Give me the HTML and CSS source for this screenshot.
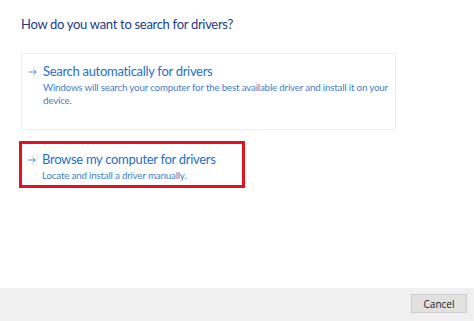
FILE: index.html
```html
<!DOCTYPE html>
<html lang="en">
<head>
    <meta charset="UTF-8">
    <title>Update Drivers</title>
    <link rel="stylesheet" href="styles.css">
</head>
<body>
    <div class="dialog">
        <div class="content">
            <h1 class="heading">How do you want to search for drivers?</h1>
            <div class="option option-auto">
                <div class="option-title">
                    <svg class="arrow" width="8" height="6" viewBox="0 0 8 6"><path d="M0 3H7.2M4.6 0.6L7.2 3L4.6 5.4" fill="none" stroke="#3f7fc9" stroke-width="0.9"/></svg>
                    <span>Search automatically for drivers</span>
                </div>
                <div class="option-desc">Windows will search your computer for the best available driver and install it on your device.</div>
            </div>
            <div class="option option-browse">
                <div class="option-title">
                    <svg class="arrow" width="8" height="6" viewBox="0 0 8 6"><path d="M0 3H7.2M4.6 0.6L7.2 3L4.6 5.4" fill="none" stroke="#3f7fc9" stroke-width="0.9"/></svg>
                    <span>Browse my computer for drivers</span>
                </div>
                <div class="option-desc">Locate and install a driver manually.</div>
            </div>
        </div>
        <div class="footer">
            <button class="btn">Cancel</button>
        </div>
    </div>
</body>
</html>
```

FILE: styles.css
```css
body {
    margin: 0;
    background: #fff;
    font-family: Lato, "Open Sans", sans-serif;
}
.dialog {
    width: 474px;
    height: 321px;
    display: flex;
    flex-direction: column;
}
.content {
    flex: 1;
    padding: 15px 0 0 21px;
}
.heading {
    margin: 0 0 20px;
    font-size: 13px;
    font-weight: normal;
    letter-spacing: -0.3px;
    color: #1c3b8f;
    line-height: 18px;
}
.option {
    display: flex;
    flex-direction: column;
    box-sizing: border-box;
}
.option-auto {
    width: 375px;
    height: 77px;
    border: 1px solid #e6eef6;
    padding: 8px 0 0 7px;
}
.option-browse {
    margin: 11px 0 0 -2px;
    width: 226px;
    height: 47px;
    border: 3px solid #e0141e;
    padding: 6px 0 0 6px;
}
.option-title {
    display: flex;
    align-items: center;
    font-size: 13px;
    letter-spacing: -0.3px;
    color: #1e70c8;
    line-height: 18px;
    white-space: nowrap;
}
.arrow {
    margin-right: 6px;
    margin-top: 1px;
}
.option-desc {
    padding-left: 14px;
    margin-top: 1px;
    font-size: 9.8px;
    letter-spacing: -0.2px;
    line-height: 13px;
    color: #3f7fc9;
}
.footer {
    height: 33px;
    background: #f0f0f0;
    display: flex;
    justify-content: flex-end;
    align-items: center;
    padding-right: 7px;
}
.btn {
    width: 56px;
    height: 19px;
    margin-top: -2px;
    padding: 0;
    background: #e1e1e1;
    border: 1px solid #cfcfcf;
    font-family: "Open Sans", sans-serif;
    font-size: 10px;
    color: #222;
}
```
